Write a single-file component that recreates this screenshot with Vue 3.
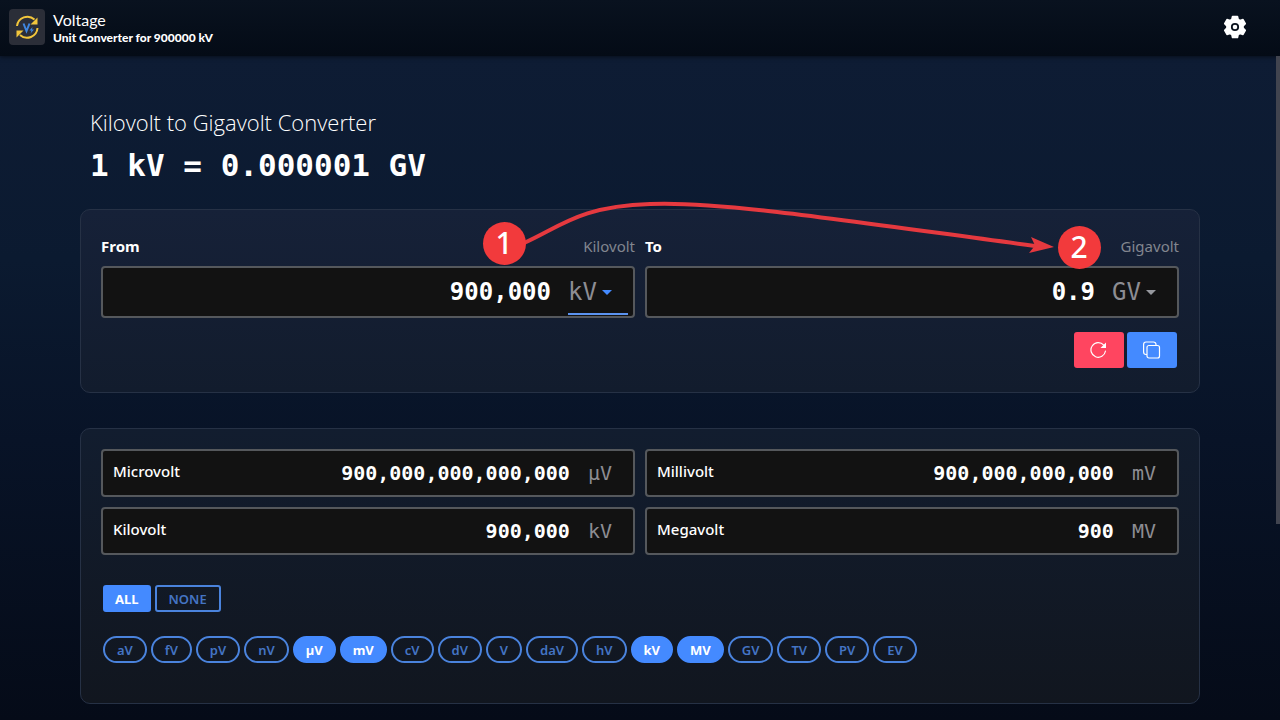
<script setup>
import { ref } from 'vue'

const from = ref('900,000')
const to = ref('0.9')
const fromUnit = ref('kV')
const toUnit = ref('GV')

const results = ref([
  { id: 'micro', name: 'Microvolt', value: '900,000,000,000,000', unit: 'µV' },
  { id: 'milli', name: 'Millivolt', value: '900,000,000,000', unit: 'mV' },
  { id: 'kilo', name: 'Kilovolt', value: '900,000', unit: 'kV' },
  { id: 'mega', name: 'Megavolt', value: '900', unit: 'MV' },
])

const units = ['aV', 'fV', 'pV', 'nV', 'µV', 'mV', 'cV', 'dV', 'V', 'daV', 'hV', 'kV', 'MV', 'GV', 'TV', 'PV', 'EV']
const active = ref(['µV', 'mV', 'kV', 'MV'])

function toggle(unit) {
  active.value = active.value.includes(unit)
    ? active.value.filter((u) => u !== unit)
    : [...active.value, unit]
}
</script>

<template>
  <div class="page">
    <header class="bar">
      <div class="logo">
        <svg viewBox="0 0 36 36" width="36" height="36" aria-hidden="true">
          <g fill="none" stroke="#f2c63c" stroke-width="2">
            <path d="M8 17A10.5 10.5 0 0 1 25.5 10.500" />
            <path d="M28.500 19A10.500 10.500 0 0 1 11 26" />
          </g>
          <path d="M28.500 8.500V15.500H21.500Z" fill="#f2c63c" />
          <path d="M7.500 28.500V21.500H14.500Z" fill="#f2c63c" />
          <path d="M14.500 14.500L17.500 22L20.500 14.500" fill="none" stroke="#3f86e0" stroke-width="2" />
          <path d="M23.500 18L20.500 21.500H22.500L21.500 24.500L25 20.500H23Z" fill="#3f86e0" />
        </svg>
      </div>
      <div class="brand">
        <div class="brand-name">Voltage</div>
        <div class="brand-sub">Unit Converter for 900000 kV</div>
      </div>
      <button class="gear" type="button" aria-label="Settings">
        <svg viewBox="0 0 24 24" width="24" height="24" aria-hidden="true">
          <path
            fill="#fff"
            stroke="#fff"
            stroke-width="1.500"
            stroke-linejoin="round"
            d="M9.500 1.500h5l.7 3 1.800 1 3-1 2.300 4.200-2.200 2.200v2.200l2.200 2.200-2.300 4.200-3-1-1.800 1-.7 3h-5l-.7-3-1.800-1-3 1-2.300-4.200 2.200-2.200v-2.200L1.700 8.700 4 4.500l3 1 1.800-1z"
          />
          <circle cx="12" cy="12" r="3.200" fill="#fff" stroke="#0a121d" stroke-width="1.800" />
        </svg>
      </button>
    </header>

    <main class="content">
      <div class="heading">
        <h1>Kilovolt to Gigavolt Converter</h1>
        <p>1 kV = 0.000001 GV</p>
      </div>

      <section class="card convert">
        <div class="columns">
          <div>
            <div class="caption">
              <label for="from">From</label>
              <span>Kilovolt</span>
            </div>
            <div class="field large">
              <input id="from" v-model="from" type="text" />
              <div class="picker focused">
                <select v-model="fromUnit" aria-label="From unit">
                  <option v-for="u in units" :key="u">{{ u }}</option>
                </select>
                <svg viewBox="0 0 10 5" width="10" height="5" aria-hidden="true"><path d="M0 0H10L5 5Z" fill="currentColor" /></svg>
              </div>
            </div>
          </div>
          <div>
            <div class="caption">
              <label for="to">To</label>
              <span>Gigavolt</span>
            </div>
            <div class="field large">
              <input id="to" v-model="to" type="text" />
              <div class="picker">
                <select v-model="toUnit" aria-label="To unit">
                  <option v-for="u in units" :key="u">{{ u }}</option>
                </select>
                <svg viewBox="0 0 10 5" width="10" height="5" aria-hidden="true"><path d="M0 0H10L5 5Z" fill="currentColor" /></svg>
              </div>
            </div>
          </div>
        </div>
        <div class="actions">
          <button class="reset" type="button" aria-label="Reset">
            <svg viewBox="0 0 18 18" width="18" height="18" aria-hidden="true">
              <path d="M15.500 10A7.300 7.300 0 1 1 13.800 4.200" fill="none" stroke="#fff" stroke-width="1.200" stroke-linecap="round" />
              <path d="M16 1.500V7H10.500Z" fill="#fff" />
            </svg>
          </button>
          <button class="copy" type="button" aria-label="Copy">
            <svg viewBox="0 0 18 18" width="18" height="18" aria-hidden="true" fill="none" stroke="#fff" stroke-width="1.200">
              <rect x="4" y="4.500" width="12.500" height="12.500" rx="2" />
              <path d="M4 13.500H3A2.500 2.500 0 0 1 .6 11V3.500A2.500 2.500 0 0 1 3 1H10.500A2.500 2.500 0 0 1 13 3.500V4.500" />
            </svg>
          </button>
        </div>

        <svg class="guide" viewBox="0 0 1120 80" aria-hidden="true">
          <path d="M444 43C480 27 500 6 570 4C640 1 760 20 955 46" fill="none" stroke="#e5393f" stroke-width="4" />
          <path d="M974 47L951 37L955 45.500L949 53Z" fill="#e5393f" />
          <circle cx="424.500" cy="43.500" r="21.500" fill="#f23a3c" />
          <circle cx="999.500" cy="47.500" r="21.500" fill="#f23a3c" />
          <text x="424" y="54">1</text>
          <text x="999" y="58">2</text>
        </svg>
      </section>

      <section class="card results">
        <div class="columns">
          <div v-for="r in results" :key="r.id" class="field small">
            <label :for="r.id">{{ r.name }}</label>
            <input :id="r.id" v-model="r.value" type="text" />
            <span class="unit">{{ r.unit }}</span>
          </div>
        </div>
        <div class="bulk">
          <button class="on" type="button" @click="active = [...units]">ALL</button>
          <button type="button" @click="active = []">NONE</button>
        </div>
        <div class="chips">
          <button
            v-for="u in units"
            :key="u"
            type="button"
            :class="{ on: active.includes(u) }"
            @click="toggle(u)"
          >{{ u }}</button>
        </div>
      </section>
    </main>
    <div class="scroll-thumb"></div>
  </div>
</template>

<style>
body {
  background: #050b18;
}
</style>

<style scoped>
.page {
  position: relative;
  box-sizing: border-box;
  min-height: 100vh;
  padding-bottom: 16px;
  background: linear-gradient(#0e1c34 56px, #0b1a30 260px, #081327 440px, #050b18 100%);
  color: #fff;
  font-family: "Noto Sans", "Open Sans", sans-serif;
}
.page * {
  box-sizing: border-box;
}
button,
input,
select {
  margin: 0;
  font-family: inherit;
}
.bar {
  display: flex;
  align-items: center;
  height: 56px;
  padding: 0 33px 2px 9px;
  background: linear-gradient(#09121f, #040b16);
  box-shadow: 0 1px 4px rgba(0, 0, 0, 0.5);
}
.logo {
  width: 36px;
  height: 36px;
  border-radius: 4px;
  background: #2b2e38;
}
.brand {
  margin-left: 8px;
  padding-top: 4px;
}
.brand-name {
  font-family: Lato, sans-serif;
  font-size: 16px;
  line-height: 18px;
}
.brand-sub {
  font-family: Lato, sans-serif;
  font-size: 12px;
  font-weight: 900;
  line-height: 18px;
}
.gear {
  display: flex;
  margin-left: auto;
  padding: 0;
  border: 0;
  background: none;
}
.content {
  padding: 52px 80px 0;
}
.heading {
  padding: 0 10px;
}
h1 {
  margin: 0;
  font-family: "Open Sans", sans-serif;
  font-size: 22px;
  font-weight: 300;
  line-height: 28px;
}
.heading p {
  margin: 10px 0 24px;
  font-family: "DejaVu Sans Mono", monospace;
  font-size: 31px;
  font-weight: 700;
  line-height: 39px;
}
.card {
  position: relative;
  padding: 20px;
  border: 1px solid #263145;
  border-radius: 10px;
}
.convert {
  padding-bottom: 24px;
  background: linear-gradient(#162138, #121c2d);
}
.results {
  margin-top: 35px;
  padding-bottom: 40px;
  background: linear-gradient(#121d2f, #11161f);
}
.columns {
  display: grid;
  grid-template-columns: 1fr 1fr;
  gap: 10px;
}
.caption {
  display: flex;
  justify-content: space-between;
  height: 36px;
  font-size: 15px;
  line-height: 32px;
}
.caption label {
  font-weight: 700;
}
.caption span {
  color: #82868f;
}
.field {
  display: flex;
  align-items: center;
  border: 2px solid #55585c;
  border-radius: 4px;
  background: #121212;
}
.field input {
  flex: 1;
  min-width: 0;
  padding: 0;
  border: 0;
  outline: 0;
  background: none;
  color: #fff;
  font-family: "DejaVu Sans Mono", monospace;
  font-weight: 700;
  text-align: right;
}
.large {
  height: 52px;
  padding-right: 5px;
}
.large input {
  font-size: 24px;
}
.picker {
  display: flex;
  align-items: center;
  gap: 4px;
  width: 60px;
  height: 46px;
  margin-left: 17px;
  color: #96989e;
}
.picker select {
  appearance: none;
  width: 30px;
  padding: 0;
  border: 0;
  outline: 0;
  background: none;
  color: #8d8d93;
  font-family: "DejaVu Sans Mono", monospace;
  font-size: 24px;
}
.focused {
  box-shadow: inset 0 -2px #5b93f0;
  color: #448aff;
}
.small {
  height: 48px;
  padding: 0 21px 0 10px;
}
.small label {
  padding-bottom: 4px;
  font-size: 15px;
  font-weight: 500;
}
.small input {
  font-size: 20px;
}
.unit {
  margin-left: 18px;
  color: #8d8d93;
  font-family: "DejaVu Sans Mono", monospace;
  font-size: 20px;
}
.actions {
  display: flex;
  justify-content: flex-end;
  gap: 3px;
  margin-top: 14px;
  padding-right: 2px;
}
.actions button {
  display: flex;
  align-items: center;
  justify-content: center;
  width: 50px;
  height: 36px;
  padding: 0;
  border: 0;
  border-radius: 3px;
}
.reset {
  background: #ff4560;
}
.copy {
  background: #448aff;
}
.bulk,
.chips {
  display: flex;
  flex-wrap: wrap;
  gap: 4px;
  padding-left: 2px;
}
.bulk {
  margin-top: 30px;
}
.chips {
  margin-top: 24px;
}
.bulk button,
.chips button {
  height: 27px;
  padding: 0 12px;
  border: 2px solid #4a83dd;
  background: transparent;
  color: #4474c4;
  font-size: 13px;
  font-weight: 600;
  line-height: 24px;
}
.bulk button {
  border-radius: 3px;
}
.chips button {
  border-radius: 14px;
}
.bulk .on,
.chips .on {
  padding: 0 10px;
  border-color: #448aff;
  background: #448aff;
  color: #fff;
  font-weight: 700;
}
.chips .on {
  padding: 0 11px;
}
.guide {
  position: absolute;
  top: -10px;
  left: -1px;
  width: calc(100% + 2px);
  overflow: visible;
  pointer-events: none;
}
.guide text {
  fill: #fff;
  font-size: 30px;
  font-weight: 500;
  text-anchor: middle;
}
.scroll-thumb {
  position: absolute;
  top: 56px;
  right: 0;
  width: 4px;
  height: 468px;
  background: #41444f;
}
</style>
